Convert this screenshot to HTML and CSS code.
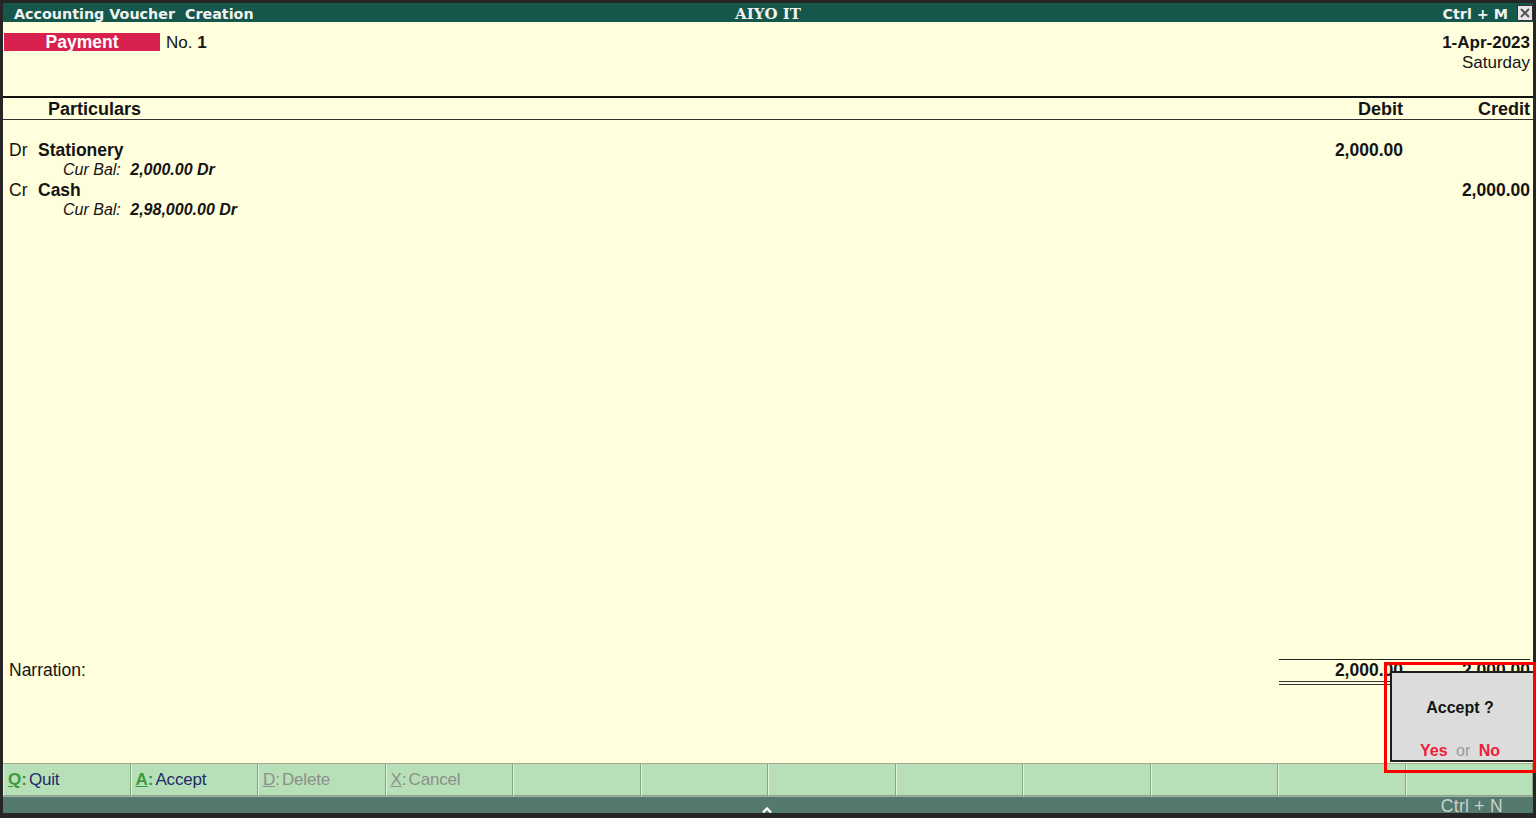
FILE: index.html
```html
<!DOCTYPE html>
<html lang="en">
<head>
    <meta charset="UTF-8">
    <meta name="viewport" content="width=device-width, initial-scale=1.0">
    <title>Accounting Voucher Creation</title>
    <link rel="stylesheet" href="styles.css">
</head>
<body>

<div class="screen">

    <div class="titlebar">
        <span class="title-left">Accounting Voucher&nbsp; Creation</span>
        <span class="title-center">AIYO IT</span>
        <span class="title-right">
            Ctrl + M
            <span class="close-box">
                <svg width="12" height="12" viewBox="0 0 12 12"><path d="M2 2 L10 10 M10 2 L2 10" stroke="#555" stroke-width="2"/></svg>
            </span>
        </span>
    </div>

    <div class="voucher-head">
        <div class="vtype">
            <span class="vtype-tag">Payment</span>
            <span class="vno">No. <b>1</b></span>
        </div>
        <div class="vdate">
            <b>1-Apr-2023</b>
            <span>Saturday</span>
        </div>
    </div>

    <div class="col-head row-grid">
        <span class="particulars">Particulars</span>
        <span class="amt">Debit</span>
        <span class="amt">Credit</span>
    </div>

    <div class="entries">
        <div class="entry row-grid">
            <span class="ledger"><span class="drcr">Dr</span><b>Stationery</b></span>
            <span class="amt">2,000.00</span>
            <span class="amt"></span>
        </div>
        <div class="curbal">Cur Bal: <b>2,000.00 Dr</b></div>

        <div class="entry row-grid">
            <span class="ledger"><span class="drcr">Cr</span><b>Cash</b></span>
            <span class="amt"></span>
            <span class="amt">2,000.00</span>
        </div>
        <div class="curbal">Cur Bal: <b>2,98,000.00 Dr</b></div>
    </div>

    <div class="foot row-grid">
        <span class="narration">Narration:</span>
        <div class="totals">
            <span class="amt">2,000.00</span>
            <span class="amt">2,000.00</span>
        </div>
    </div>

    <div class="buttons">
        <div class="btn"><u class="key">Q</u><span class="key">:</span><span class="label">Quit</span></div>
        <div class="btn"><u class="key">A</u><span class="key">:</span><span class="label">Accept</span></div>
        <div class="btn off"><u>D</u>:<span class="label">Delete</span></div>
        <div class="btn off"><u>X</u>:<span class="label">Cancel</span></div>
        <div class="btn"></div>
        <div class="btn"></div>
        <div class="btn"></div>
        <div class="btn"></div>
        <div class="btn"></div>
        <div class="btn"></div>
        <div class="btn"></div>
        <div class="btn"></div>
    </div>

    <div class="statusbar">
        <span class="chevron">
            <svg width="12" height="8" viewBox="0 0 12 8"><path d="M2 6.5 L6 2.5 L10 6.5" fill="none" stroke="#fff" stroke-width="2.4"/></svg>
        </span>
        <span class="shortcut">Ctrl + N</span>
    </div>

    <div class="highlight"></div>
    <div class="accept-box">
        <div class="accept-title">Accept ?</div>
        <div class="accept-opts"><span class="red">Yes</span> <span class="or">or</span> <span class="red">No</span></div>
    </div>

</div>

</body>
</html>
```

FILE: styles.css
```css
body {
    margin: 0;
    font-family: "Liberation Sans", Arial, sans-serif;
    color: #141414;
}

.screen {
    position: relative;
    box-sizing: border-box;
    width: 1536px;
    height: 818px;
    padding: 3px 3px 5px 3px;
    background-color: #262626;
    display: flex;
    flex-direction: column;
}

/* title bar */
.titlebar {
    box-sizing: border-box;
    height: 19px;
    padding-top: 2px;
    background-color: #15574a;
    color: #f2f2f2;
    display: grid;
    grid-template-columns: 1fr auto 1fr;
    align-items: center;
    font-family: "DejaVu Sans", Verdana, sans-serif;
    font-weight: bold;
    font-size: 14.3px;
}

.title-left {
    padding-left: 11px;
}

.title-center {
    font-family: "DejaVu Serif", Georgia, serif;
    font-size: 15px;
}

.title-right {
    justify-self: end;
    display: flex;
    align-items: center;
}

.close-box {
    box-sizing: border-box;
    width: 16px;
    height: 16px;
    margin-left: 9px;
    margin-top: -2px;
    background-color: #e6e6e6;
    border: 1px solid #333;
    display: flex;
    align-items: center;
    justify-content: center;
}

/* voucher header */
.voucher-head {
    height: 74px;
    background-color: #fffedd;
    display: flex;
    justify-content: space-between;
    font-size: 17px;
}

.vtype {
    display: flex;
    align-items: center;
    height: 18px;
    margin-top: 11px;
    padding-left: 1px;
}

.vtype-tag {
    width: 156px;
    height: 18px;
    line-height: 18px;
    background-color: #d9214f;
    color: #fff;
    font-weight: bold;
    font-size: 17.5px;
    text-align: center;
}

.vno {
    margin-left: 6px;
    padding-top: 2px;
}

.vdate {
    display: flex;
    flex-direction: column;
    align-items: flex-end;
    padding-top: 11px;
    padding-right: 3px;
    line-height: 20px;
}

/* shared column grid */
.row-grid {
    display: grid;
    grid-template-columns: 1fr 127px 127px;
    padding-right: 3px;
}

.amt {
    text-align: right;
}

.col-head {
    box-sizing: border-box;
    height: 24px;
    padding-top: 1px;
    line-height: 21px;
    background-color: #fffedd;
    border-top: 2px solid #111;
    border-bottom: 1px solid #333;
    font-weight: bold;
    font-size: 18px;
}

.particulars {
    padding-left: 45px;
}

/* entries */
.entries {
    flex: 1;
    background-color: #fffedd;
    padding-top: 20px;
    font-size: 17.5px;
    line-height: 20px;
}

.entry {
    height: 20px;
    line-height: 20px;
}

.entry .ledger {
    padding-left: 6px;
}

.entry b,
.entry .amt {
    font-weight: bold;
}

.drcr {
    display: inline-block;
    width: 29px;
}

.curbal {
    height: 20px;
    line-height: 19px;
    padding-left: 60px;
    font-style: italic;
    font-size: 16px;
}

.curbal b {
    margin-left: 5px;
}

/* narration and totals */
.foot {
    height: 108px;
    box-sizing: border-box;
    padding-top: 3px;
    background-color: #fffedd;
    font-size: 17.5px;
    line-height: 20px;
    border-bottom: 1px solid #a9a99a;
}

.narration {
    padding-left: 6px;
    padding-top: 1px;
}

.totals {
    grid-column: 2 / 4;
    align-self: start;
    margin-left: 3px;
    display: grid;
    grid-template-columns: 124px 127px;
    border-top: 1px solid #222;
    border-bottom: 4px double #333;
    font-weight: bold;
    height: 21px;
}

/* button bar */
.buttons {
    height: 32px;
    display: grid;
    grid-template-columns: repeat(12, 1fr);
    background-color: #b8e0b8;
}

.btn {
    box-sizing: border-box;
    border-left: 1px solid #e0f3dd;
    border-right: 1px solid #86a680;
    border-bottom: 1px solid #86a680;
    padding-left: 4px;
    line-height: 31px;
    font-size: 17px;
    color: #1f2a6b;
    white-space: nowrap;
}

.btn .key {
    color: #3c9a3c;
    font-weight: bold;
}

.btn .label {
    margin-left: 2px;
    letter-spacing: -0.2px;
}

.btn.off {
    color: #8c8f8c;
}

/* status bar */
.statusbar {
    height: 17px;
    background-color: #547a70;
    border-top: 1px solid #9fb3ab;
    box-sizing: border-box;
    position: relative;
    display: flex;
    justify-content: flex-end;
    align-items: center;
}

.chevron {
    position: absolute;
    left: 758px;
    top: 3px;
}

.shortcut {
    padding-right: 30px;
    padding-top: 2px;
    color: #c9d2cd;
    font-size: 17.5px;
    letter-spacing: 0.3px;
    line-height: 16px;
}

/* accept popup */
.highlight {
    position: absolute;
    left: 1384px;
    top: 662px;
    width: 152px;
    height: 111px;
    box-sizing: border-box;
    border: 3px solid #ff0000;
}

.accept-box {
    position: absolute;
    left: 1390px;
    top: 671px;
    width: 143px;
    height: 91px;
    box-sizing: border-box;
    padding-right: 5px;
    background-color: #dcdcdc;
    border: 2px solid #1e1e1e;
    border-right-width: 0;
    text-align: center;
    font-size: 16px;
}

.accept-title {
    margin-top: 26px;
    font-weight: bold;
}

.accept-opts {
    margin-top: 25px;
    font-weight: bold;
}

.red {
    color: #f0203a;
}

.or {
    color: #9a9a9a;
    font-weight: normal;
    margin: 0 4px;
}
```
